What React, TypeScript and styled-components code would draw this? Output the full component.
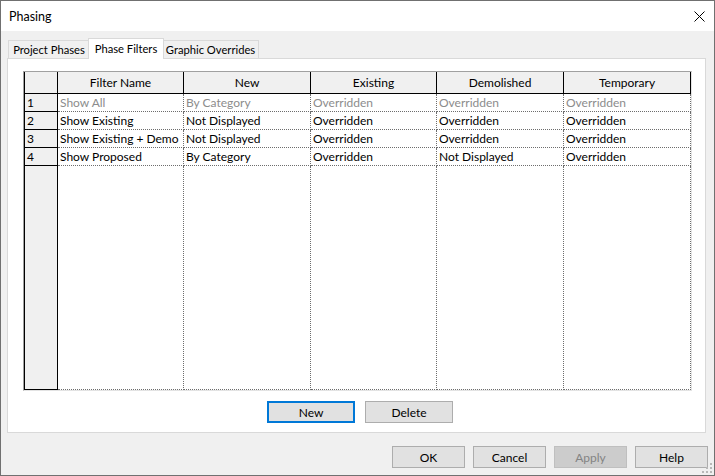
import styled, { createGlobalStyle } from "styled-components";

const GlobalStyle = createGlobalStyle`
  html, body { margin: 0; padding: 0; background: #ffffff; }
  body { font-family: Lato, "Liberation Sans", Arial, sans-serif; font-size: 12px; color: #000; }
  * { box-sizing: border-box; }
`;

const Window = styled.div`
  position: relative;
  width: 715px;
  height: 476px;
  border: 1px solid #707070;
  background: #f0f0f0;
  display: flex;
  flex-direction: column;
  overflow: hidden;
`;

const TitleBar = styled.div`
  height: 30px;
  flex: none;
  background: #ffffff;
  display: flex;
  align-items: center;
  justify-content: space-between;
  padding: 0 9px 0 8px;
  font-size: 12.5px;
`;

const CloseButton = styled.div`
  width: 12px;
  height: 12px;
  display: flex;
  align-items: center;
  justify-content: center;
`;

const TabStrip = styled.div`
  height: 27px;
  flex: none;
  display: flex;
  align-items: flex-end;
  padding-left: 7px;
`;

const Tab = styled.div<{ $w: number; $active?: boolean }>`
  position: relative;
  width: ${(p) => (p.$active ? p.$w + 4 : p.$w)}px;
  height: ${(p) => (p.$active ? 21 : 18)}px;
  margin: ${(p) => (p.$active ? "0 -2px -1px" : "0")};
  z-index: ${(p) => (p.$active ? 1 : 0)};
  background: ${(p) => (p.$active ? "#ffffff" : "#f0f0f0")};
  border: 1px solid #d9d9d9;
  border-bottom: none;
  display: flex;
  align-items: center;
  justify-content: center;
  padding-bottom: ${(p) => (p.$active ? 2 : 0)}px;
  font-size: 11.2px;
  white-space: nowrap;
`;

const Panel = styled.div`
  height: 375px;
  flex: none;
  margin: 0 8px 0 6px;
  background: #ffffff;
  border: 1px solid #d9d9d9;
  padding: 12px 13px 9px 15px;
  display: flex;
  flex-direction: column;
`;

const Grid = styled.div`
  height: 320px;
  flex: none;
  border-top: 1px solid #a0a0a0;
  border-left: 1px solid #a0a0a0;
  border-right: 1px solid #e3e3e3;
  border-bottom: 1px solid #e3e3e3;
  display: grid;
  grid-template-columns: 34px 126px 127px 126px 127px 127px;
  grid-template-rows: 22px repeat(4, 18px) 1fr;
`;

const HeadCell = styled.div<{ $first?: boolean }>`
  background: #f0f0f0;
  border-right: 1px solid #000;
  border-bottom: 1px solid #000;
  border-left: ${(p) => (p.$first ? "1px solid #000" : "none")};
  display: flex;
  align-items: center;
  justify-content: center;
`;

const RowHead = styled.div`
  background: #f0f0f0;
  border-left: 1px solid #000;
  border-right: 1px solid #000;
  border-bottom: 1px solid #000;
  padding-left: 2px;
  display: flex;
  align-items: center;
`;

const Cell = styled.div<{ $muted?: boolean }>`
  border-right: 1px dotted #6d6d6d;
  border-bottom: 1px dotted #6d6d6d;
  padding-left: 2px;
  display: flex;
  align-items: center;
  white-space: nowrap;
  overflow: hidden;
  color: ${(p) => (p.$muted ? "#8c8c8c" : "#000")};
`;

const ActionRow = styled.div`
  flex: none;
  display: flex;
  justify-content: center;
  gap: 10px;
  padding-left: 5px;
  margin-top: 10px;
`;

const Button = styled.div<{ $w: number; $focused?: boolean; $disabled?: boolean }>`
  width: ${(p) => p.$w}px;
  height: 22px;
  display: flex;
  align-items: center;
  justify-content: center;
  background: ${(p) => (p.$disabled ? "#cccccc" : "#e1e1e1")};
  border: ${(p) =>
    p.$focused ? "2px solid #0078d7" : p.$disabled ? "1px solid #bfbfbf" : "1px solid #adadad"};
  color: ${(p) => (p.$disabled ? "#838383" : "#000")};
`;

const Footer = styled.div`
  flex: none;
  display: flex;
  justify-content: flex-end;
  gap: 8px;
  padding: 13px 6px 0 0;
`;

const Grip = styled.svg`
  position: absolute;
  right: 1px;
  bottom: 1px;
`;

const columns = ["Filter Name", "New", "Existing", "Demolished", "Temporary"];

const rows = [
  { no: 1, muted: true, cells: ["Show All", "By Category", "Overridden", "Overridden", "Overridden"] },
  { no: 2, cells: ["Show Existing", "Not Displayed", "Overridden", "Overridden", "Overridden"] },
  { no: 3, cells: ["Show Existing + Demo", "Not Displayed", "Overridden", "Overridden", "Overridden"] },
  { no: 4, cells: ["Show Proposed", "By Category", "Overridden", "Not Displayed", "Overridden"] },
];

const App = () => {
  return (
    <Window>
      <GlobalStyle />
      <TitleBar>
        <span>Phasing</span>
        <CloseButton>
          <svg width="11" height="11" viewBox="0 0 11 11">
            <path d="M0.5 0.5 L10.5 10.5 M10.5 0.5 L0.5 10.5" stroke="#000" strokeWidth="1" />
          </svg>
        </CloseButton>
      </TitleBar>

      <TabStrip>
        <Tab $w={82}>Project Phases</Tab>
        <Tab $w={72} $active>
          Phase Filters
        </Tab>
        <Tab $w={97}>Graphic Overrides</Tab>
      </TabStrip>

      <Panel>
        <Grid>
          <HeadCell $first />
          {columns.map((c) => (
            <HeadCell key={c}>{c}</HeadCell>
          ))}
          {rows.map((r) => [
            <RowHead key={"n" + r.no}>{r.no}</RowHead>,
            ...r.cells.map((c, i) => (
              <Cell key={r.no + "-" + i} $muted={r.muted}>
                {c}
              </Cell>
            )),
          ])}
          <RowHead />
          {columns.map((c) => (
            <Cell key={"f" + c} />
          ))}
        </Grid>
        <ActionRow>
          <Button $w={88} $focused>
            New
          </Button>
          <Button $w={88}>Delete</Button>
        </ActionRow>
      </Panel>

      <Footer>
        <Button $w={73}>OK</Button>
        <Button $w={73}>Cancel</Button>
        <Button $w={73} $disabled>
          Apply
        </Button>
        <Button $w={73}>Help</Button>
      </Footer>

      <Grip width="11" height="11" viewBox="0 0 11 11">
        {[
          [8, 0],
          [4, 4],
          [8, 4],
          [0, 8],
          [4, 8],
          [8, 8],
        ].map(([x, y]) => (
          <rect key={x + "-" + y} x={x} y={y} width="2" height="2" fill="#b8b8b8" />
        ))}
      </Grip>
    </Window>
  );
};

export default App;
